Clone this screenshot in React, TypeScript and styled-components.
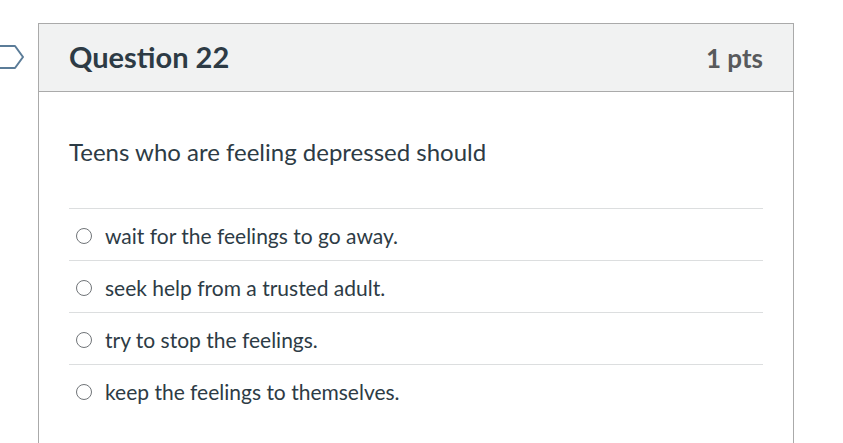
import styled, { createGlobalStyle } from 'styled-components';

const GlobalStyle = createGlobalStyle`
  html, body {
    margin: 0;
    padding: 0;
    background: #fff;
    font-family: Lato, "Noto Sans", sans-serif;
    color: #2d3b45;
  }
`;

const answers = [
  'wait for the feelings to go away.',
  'seek help from a trusted adult.',
  'try to stop the feelings.',
  'keep the feelings to themselves.',
];

const Page = styled.div`
  display: flex;
  align-items: flex-start;
  padding-top: 23px;
  height: 420px;
  overflow: hidden;
`;

const Gutter = styled.div`
  width: 38px;
  flex-shrink: 0;
  padding-top: 21px;
`;

const Card = styled.div`
  width: 754px;
  height: 440px;
  border: 1px solid #aaaaaa;
  border-bottom: none;
`;

const Header = styled.div`
  height: 67px;
  display: flex;
  align-items: center;
  justify-content: space-between;
  padding: 0 30px;
  background: #f1f2f2;
  border-bottom: 1px solid #aaaaaa;
`;

const Title = styled.h2`
  margin: 0 0 3px;
  font-size: 29px;
  font-weight: 700;
  color: #2d3b45;
`;

const Points = styled.div`
  font-size: 26px;
  font-weight: 700;
  color: #585a5c;
`;

const Body = styled.div`
  padding: 44px 30px 0;
`;

const Prompt = styled.p`
  margin: 0 0 40px;
  font-size: 24px;
  line-height: 32px;
`;

const Answer = styled.label`
  display: flex;
  align-items: center;
  gap: 13px;
  height: 52px;
  border-top: 1px solid #dcdedf;
  padding-left: 7px;
  font-size: 21px;
  padding-top: 1px;
  box-sizing: border-box;
`;

const Radio = styled.span`
  width: 14px;
  height: 14px;
  margin-top: 2px;
  border-radius: 50%;
  border: 1.5px solid #707478;
  flex-shrink: 0;
`;

const App = () => (
  <>
    <GlobalStyle />
    <Page>
      <Gutter>
        <svg width="26" height="28" viewBox="0 0 26 28">
          <path
            d="M-2 2 H15 L23 13 L15 24 H-2"
            fill="#fff"
            stroke="#5b7c98"
            strokeWidth="2"
            strokeLinejoin="round"
          />
        </svg>
      </Gutter>
      <Card>
        <Header>
          <Title>Question 22</Title>
          <Points>1 pts</Points>
        </Header>
        <Body>
          <Prompt>Teens who are feeling depressed should</Prompt>
          {answers.map((a) => (
            <Answer key={a}>
              <Radio />
              {a}
            </Answer>
          ))}
        </Body>
      </Card>
    </Page>
  </>
);

export default App;
